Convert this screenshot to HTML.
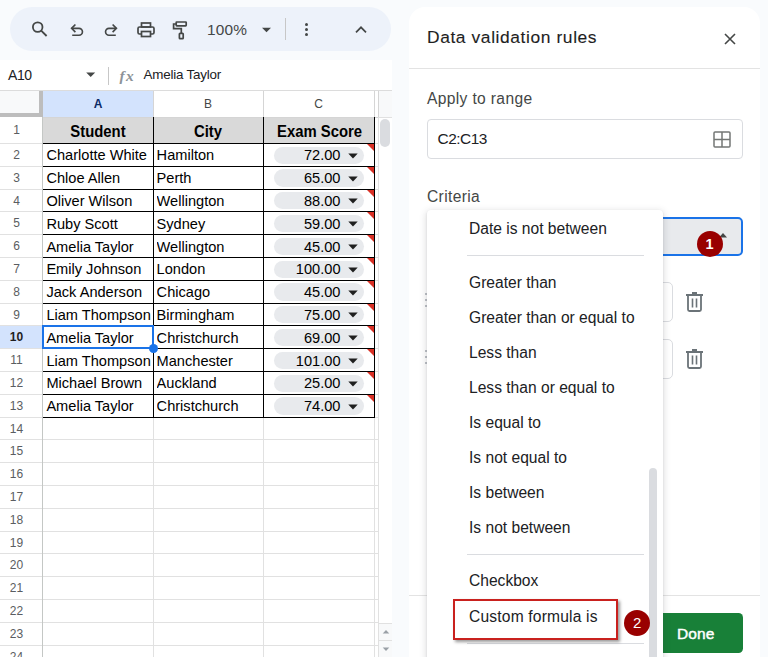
<!DOCTYPE html>
<html><head><meta charset="utf-8"><title>Data validation rules</title>
<style>
*{box-sizing:border-box}
html,body{margin:0;padding:0}
body{width:768px;height:657px;overflow:hidden;background:#f9fbfd;position:relative;font-family:"Liberation Sans",sans-serif;color:#202124}
.abs{position:absolute}
#toolbar{left:10px;top:7px;width:381px;height:44px;border-radius:22px;background:#edf2fa}
#sheet{left:0;top:60px;width:391.5px;height:597px;background:#fff;overflow:hidden}
.hl{position:absolute;left:0;height:1px;background:#e1e1e1}
.vl{position:absolute;width:1px;background:#e1e1e1}
.rn{position:absolute;left:0;width:33px;text-align:center;font-size:12px;color:#5a5d61}
.cell{position:absolute;font-size:14.6px;color:#000;white-space:nowrap;overflow:hidden}
.bl{position:absolute;background:#000}
.chip{position:absolute;background:#e8eaed;border-radius:9px}
.tri{position:absolute;width:0;height:0;border-top:7px solid #d93025;border-left:7px solid transparent}
#panel{left:409px;top:7px;width:351px;height:660px;background:#fff;border-radius:16px 16px 0 0}
.mi{position:absolute;left:42px;font-size:15.6px;color:#202124;white-space:nowrap;line-height:18px}
.md{position:absolute;left:40px;width:177px;height:1px;background:#dadce0}
.badge{position:absolute;width:26px;height:26px;border-radius:13px;background:#990000;color:#fff;text-align:center;line-height:26px;font-size:15px}
</style></head><body>

<div id="toolbar" class="abs"></div>
<svg class="abs" style="left:0;top:0" width="400" height="58" viewBox="0 0 400 58" fill="none" stroke="#444746" stroke-width="1.8" stroke-linecap="butt" stroke-linejoin="miter">
<circle cx="37.7" cy="27.1" r="4.8"/><path d="M41.2 30.6 L46.6 36"/>
<path d="M71.8 28.3 H79 A3.45 3.45 0 0 1 79 35.2 H72.2" stroke-width="1.65"/><path d="M75.4 24.5 L71.6 28.3 L75.4 32.1" stroke-width="1.65"/>
<path d="M116.2 28.3 H109 A3.45 3.45 0 0 0 109 35.2 H115.8" stroke-width="1.65"/><path d="M112.6 24.5 L116.4 28.3 L112.6 32.1" stroke-width="1.65"/>
<rect x="141.5" y="23" width="9" height="4" stroke-width="1.7"/><rect x="138" y="27" width="16" height="7" rx="1.5" stroke-width="1.7"/><rect x="141.5" y="31.5" width="9" height="5" fill="#edf2fa" stroke-width="1.7"/>
<rect x="176.2" y="22" width="10" height="3.8" rx="0.5" stroke-width="1.7"/><path d="M176 24 H173.6 V28.6 H181.3 V33" stroke-width="1.7"/><rect x="179.4" y="33.4" width="3.8" height="5.2" rx="0.7" stroke-width="1.7"/>
<path d="M356 32.3 L361 27.3 L366 32.3" stroke-width="1.7"/>
<path d="M285.5 18 V40" stroke="#c7c7c7" stroke-width="1"/>
<g fill="#444746" stroke="none"><circle cx="306.5" cy="24.6" r="1.5"/><circle cx="306.5" cy="29.6" r="1.5"/><circle cx="306.5" cy="34.6" r="1.5"/>
<path d="M262 27.7 H271 L266.5 32.2 Z"/></g>
</svg>
<div class="abs" style="left:207px;top:21px;font-size:15.4px;line-height:18px;color:#444746;letter-spacing:0.2px">100%</div>
<div id="sheet" class="abs">
<div class="abs" style="left:8px;top:7px;font-size:14px;line-height:17px;color:#202124;letter-spacing:-0.4px">A10</div>
<svg class="abs" style="left:86.3px;top:12.3px" width="10" height="6"><path d="M0.2 0.4 H9.2 L4.7 5 Z" fill="#444746"/></svg>
<div class="abs" style="left:108px;top:7px;width:1px;height:18px;background:#c7c7c7"></div>
<div class="abs" style="left:119.5px;top:6px;font-family:'Liberation Serif',serif;font-style:italic;font-weight:bold;font-size:15.4px;line-height:20px;color:#8d9398;letter-spacing:1.3px">fx</div>
<div class="abs" style="left:143.5px;top:6px;font-size:13.4px;line-height:17px;color:#202124;letter-spacing:-0.2px">Amelia Taylor</div>
<div class="hl" style="top:30px;width:392px;background:#dcdcdc"></div>
<div class="abs" style="left:0;top:31px;width:43px;height:26px;background:#f8f9fa;border-right:4px solid #bdbdbd;border-bottom:4px solid #bdbdbd"></div>
<div class="abs" style="left:43px;top:31px;width:110px;height:26px;background:#d3e3fd"></div>
<div class="abs" style="left:43px;top:37px;width:110px;text-align:center;font-size:12px;line-height:15px;font-weight:bold;color:#0b2a66">A</div>
<div class="abs" style="left:153px;top:37px;width:110px;text-align:center;font-size:12px;line-height:15px;color:#444746">B</div>
<div class="abs" style="left:263px;top:37px;width:111px;text-align:center;font-size:12px;line-height:15px;color:#444746">C</div>
<div class="vl" style="left:153px;top:31px;height:26px;background:#d5d5d5"></div>
<div class="vl" style="left:263px;top:31px;height:26px;background:#d5d5d5"></div>
<div class="vl" style="left:374px;top:31px;height:26px;background:#d5d5d5"></div>
<div class="vl" style="left:378px;top:31px;height:26px;background:#d5d5d5"></div>
<div class="hl" style="top:57px;left:43px;width:336px;background:#d5d5d5"></div>
<div class="abs" style="left:0;top:266px;width:43px;height:22px;background:#d3e3fd"></div>
<div class="hl" style="top:83px;width:379px"></div>
<div class="hl" style="top:106px;width:379px"></div>
<div class="hl" style="top:129px;width:379px"></div>
<div class="hl" style="top:151px;width:379px"></div>
<div class="hl" style="top:174px;width:379px"></div>
<div class="hl" style="top:197px;width:379px"></div>
<div class="hl" style="top:220px;width:379px"></div>
<div class="hl" style="top:243px;width:379px"></div>
<div class="hl" style="top:265px;width:379px"></div>
<div class="hl" style="top:288px;width:379px"></div>
<div class="hl" style="top:311px;width:379px"></div>
<div class="hl" style="top:334px;width:379px"></div>
<div class="hl" style="top:357px;width:379px"></div>
<div class="hl" style="top:379px;width:379px"></div>
<div class="hl" style="top:402px;width:379px"></div>
<div class="hl" style="top:425px;width:379px"></div>
<div class="hl" style="top:448px;width:379px"></div>
<div class="hl" style="top:471px;width:379px"></div>
<div class="hl" style="top:493px;width:379px"></div>
<div class="hl" style="top:516px;width:379px"></div>
<div class="hl" style="top:539px;width:379px"></div>
<div class="hl" style="top:562px;width:379px"></div>
<div class="hl" style="top:585px;width:379px"></div>
<div class="hl" style="top:607px;width:379px"></div>
<div class="vl" style="left:42px;top:57px;height:560px;background:#c4c7c5"></div>
<div class="vl" style="left:153px;top:57px;height:560px"></div>
<div class="vl" style="left:263px;top:57px;height:560px"></div>
<div class="vl" style="left:374px;top:57px;height:560px"></div>
<div class="vl" style="left:378px;top:57px;height:560px"></div>
<div class="rn" style="top:63px;height:14px;line-height:14px;">1</div>
<div class="rn" style="top:88px;height:14px;line-height:14px;">2</div>
<div class="rn" style="top:111px;height:14px;line-height:14px;">3</div>
<div class="rn" style="top:134px;height:14px;line-height:14px;">4</div>
<div class="rn" style="top:156px;height:14px;line-height:14px;">5</div>
<div class="rn" style="top:179px;height:14px;line-height:14px;">6</div>
<div class="rn" style="top:202px;height:14px;line-height:14px;">7</div>
<div class="rn" style="top:225px;height:14px;line-height:14px;">8</div>
<div class="rn" style="top:248px;height:14px;line-height:14px;">9</div>
<div class="rn" style="top:270px;height:14px;line-height:14px;font-weight:bold;color:#1f1f1f">10</div>
<div class="rn" style="top:293px;height:14px;line-height:14px;">11</div>
<div class="rn" style="top:316px;height:14px;line-height:14px;">12</div>
<div class="rn" style="top:339px;height:14px;line-height:14px;">13</div>
<div class="rn" style="top:362px;height:14px;line-height:14px;">14</div>
<div class="rn" style="top:384px;height:14px;line-height:14px;">15</div>
<div class="rn" style="top:407px;height:14px;line-height:14px;">16</div>
<div class="rn" style="top:430px;height:14px;line-height:14px;">17</div>
<div class="rn" style="top:453px;height:14px;line-height:14px;">18</div>
<div class="rn" style="top:476px;height:14px;line-height:14px;">19</div>
<div class="rn" style="top:498px;height:14px;line-height:14px;">20</div>
<div class="rn" style="top:521px;height:14px;line-height:14px;">21</div>
<div class="rn" style="top:544px;height:14px;line-height:14px;">22</div>
<div class="rn" style="top:567px;height:14px;line-height:14px;">23</div>
<div class="rn" style="top:590px;height:14px;line-height:14px;">24</div>
<div class="abs" style="left:43px;top:58px;width:331px;height:25px;background:#d9d9d9"></div>
<div class="cell" style="left:43.3px;top:58px;width:110px;height:25px;line-height:28px;text-align:center;font-weight:bold;font-size:15.8px;transform:scaleX(0.94)">Student</div>
<div class="cell" style="left:153.3px;top:58px;width:110px;height:25px;line-height:28px;text-align:center;font-weight:bold;font-size:15.8px;transform:scaleX(0.94)">City</div>
<div class="cell" style="left:263.8px;top:58px;width:111px;height:25px;line-height:28px;text-align:center;font-weight:bold;font-size:15.8px;transform:scaleX(0.94)">Exam Score</div>
<div class="cell" style="left:46.4px;top:85px;width:106.6px;height:20px;line-height:20px">Charlotte White</div>
<div class="cell" style="left:156.6px;top:85px;width:105px;height:20px;line-height:20px">Hamilton</div>
<div class="chip" style="left:274px;top:86.5px;width:90px;height:17.4px"></div>
<div class="cell" style="left:263px;top:85px;width:77.5px;height:20px;line-height:20px;text-align:right">72.00</div>
<svg class="abs" style="left:347.5px;top:93px" width="10" height="6"><path d="M0.3 0.5 H9.7 L5 5.5 Z" fill="#1f1f1f"/></svg>
<div class="tri" style="left:367px;top:84px"></div>
<div class="cell" style="left:46.4px;top:108px;width:106.6px;height:20px;line-height:20px">Chloe Allen</div>
<div class="cell" style="left:156.6px;top:108px;width:105px;height:20px;line-height:20px">Perth</div>
<div class="chip" style="left:274px;top:109.3px;width:90px;height:17.4px"></div>
<div class="cell" style="left:263px;top:108px;width:77.5px;height:20px;line-height:20px;text-align:right">65.00</div>
<svg class="abs" style="left:347.5px;top:116px" width="10" height="6"><path d="M0.3 0.5 H9.7 L5 5.5 Z" fill="#1f1f1f"/></svg>
<div class="tri" style="left:367px;top:107px"></div>
<div class="cell" style="left:46.4px;top:131px;width:106.6px;height:20px;line-height:20px">Oliver Wilson</div>
<div class="cell" style="left:156.6px;top:131px;width:105px;height:20px;line-height:20px">Wellington</div>
<div class="chip" style="left:274px;top:132.1px;width:90px;height:17.4px"></div>
<div class="cell" style="left:263px;top:131px;width:77.5px;height:20px;line-height:20px;text-align:right">88.00</div>
<svg class="abs" style="left:347.5px;top:138px" width="10" height="6"><path d="M0.3 0.5 H9.7 L5 5.5 Z" fill="#1f1f1f"/></svg>
<div class="tri" style="left:367px;top:130px"></div>
<div class="cell" style="left:46.4px;top:154px;width:106.6px;height:20px;line-height:20px">Ruby Scott</div>
<div class="cell" style="left:156.6px;top:154px;width:105px;height:20px;line-height:20px">Sydney</div>
<div class="chip" style="left:274px;top:154.9px;width:90px;height:17.4px"></div>
<div class="cell" style="left:263px;top:154px;width:77.5px;height:20px;line-height:20px;text-align:right">59.00</div>
<svg class="abs" style="left:347.5px;top:161px" width="10" height="6"><path d="M0.3 0.5 H9.7 L5 5.5 Z" fill="#1f1f1f"/></svg>
<div class="tri" style="left:367px;top:152px"></div>
<div class="cell" style="left:46.4px;top:177px;width:106.6px;height:20px;line-height:20px">Amelia Taylor</div>
<div class="cell" style="left:156.6px;top:177px;width:105px;height:20px;line-height:20px">Wellington</div>
<div class="chip" style="left:274px;top:177.7px;width:90px;height:17.4px"></div>
<div class="cell" style="left:263px;top:177px;width:77.5px;height:20px;line-height:20px;text-align:right">45.00</div>
<svg class="abs" style="left:347.5px;top:184px" width="10" height="6"><path d="M0.3 0.5 H9.7 L5 5.5 Z" fill="#1f1f1f"/></svg>
<div class="tri" style="left:367px;top:175px"></div>
<div class="cell" style="left:46.4px;top:199px;width:106.6px;height:20px;line-height:20px">Emily Johnson</div>
<div class="cell" style="left:156.6px;top:199px;width:105px;height:20px;line-height:20px">London</div>
<div class="chip" style="left:274px;top:200.5px;width:90px;height:17.4px"></div>
<div class="cell" style="left:263px;top:199px;width:77.5px;height:20px;line-height:20px;text-align:right">100.00</div>
<svg class="abs" style="left:347.5px;top:207px" width="10" height="6"><path d="M0.3 0.5 H9.7 L5 5.5 Z" fill="#1f1f1f"/></svg>
<div class="tri" style="left:367px;top:198px"></div>
<div class="cell" style="left:46.4px;top:222px;width:106.6px;height:20px;line-height:20px">Jack Anderson</div>
<div class="cell" style="left:156.6px;top:222px;width:105px;height:20px;line-height:20px">Chicago</div>
<div class="chip" style="left:274px;top:223.3px;width:90px;height:17.4px"></div>
<div class="cell" style="left:263px;top:222px;width:77.5px;height:20px;line-height:20px;text-align:right">45.00</div>
<svg class="abs" style="left:347.5px;top:230px" width="10" height="6"><path d="M0.3 0.5 H9.7 L5 5.5 Z" fill="#1f1f1f"/></svg>
<div class="tri" style="left:367px;top:221px"></div>
<div class="cell" style="left:46.4px;top:245px;width:106.6px;height:20px;line-height:20px">Liam Thompson</div>
<div class="cell" style="left:156.6px;top:245px;width:105px;height:20px;line-height:20px">Birmingham</div>
<div class="chip" style="left:274px;top:246.1px;width:90px;height:17.4px"></div>
<div class="cell" style="left:263px;top:245px;width:77.5px;height:20px;line-height:20px;text-align:right">75.00</div>
<svg class="abs" style="left:347.5px;top:252px" width="10" height="6"><path d="M0.3 0.5 H9.7 L5 5.5 Z" fill="#1f1f1f"/></svg>
<div class="tri" style="left:367px;top:244px"></div>
<div class="cell" style="left:46.4px;top:268px;width:106.6px;height:20px;line-height:20px">Amelia Taylor</div>
<div class="cell" style="left:156.6px;top:268px;width:105px;height:20px;line-height:20px">Christchurch</div>
<div class="chip" style="left:274px;top:268.9px;width:90px;height:17.4px"></div>
<div class="cell" style="left:263px;top:268px;width:77.5px;height:20px;line-height:20px;text-align:right">69.00</div>
<svg class="abs" style="left:347.5px;top:275px" width="10" height="6"><path d="M0.3 0.5 H9.7 L5 5.5 Z" fill="#1f1f1f"/></svg>
<div class="tri" style="left:367px;top:266px"></div>
<div class="cell" style="left:46.4px;top:291px;width:106.6px;height:20px;line-height:20px">Liam Thompson</div>
<div class="cell" style="left:156.6px;top:291px;width:105px;height:20px;line-height:20px">Manchester</div>
<div class="chip" style="left:274px;top:291.7px;width:90px;height:17.4px"></div>
<div class="cell" style="left:263px;top:291px;width:77.5px;height:20px;line-height:20px;text-align:right">101.00</div>
<svg class="abs" style="left:347.5px;top:298px" width="10" height="6"><path d="M0.3 0.5 H9.7 L5 5.5 Z" fill="#1f1f1f"/></svg>
<div class="tri" style="left:367px;top:289px"></div>
<div class="cell" style="left:46.4px;top:313px;width:106.6px;height:20px;line-height:20px">Michael Brown</div>
<div class="cell" style="left:156.6px;top:313px;width:105px;height:20px;line-height:20px">Auckland</div>
<div class="chip" style="left:274px;top:314.5px;width:90px;height:17.4px"></div>
<div class="cell" style="left:263px;top:313px;width:77.5px;height:20px;line-height:20px;text-align:right">25.00</div>
<svg class="abs" style="left:347.5px;top:321px" width="10" height="6"><path d="M0.3 0.5 H9.7 L5 5.5 Z" fill="#1f1f1f"/></svg>
<div class="tri" style="left:367px;top:312px"></div>
<div class="cell" style="left:46.4px;top:336px;width:106.6px;height:20px;line-height:20px">Amelia Taylor</div>
<div class="cell" style="left:156.6px;top:336px;width:105px;height:20px;line-height:20px">Christchurch</div>
<div class="chip" style="left:274px;top:337.3px;width:90px;height:17.4px"></div>
<div class="cell" style="left:263px;top:336px;width:77.5px;height:20px;line-height:20px;text-align:right">74.00</div>
<svg class="abs" style="left:347.5px;top:344px" width="10" height="6"><path d="M0.3 0.5 H9.7 L5 5.5 Z" fill="#1f1f1f"/></svg>
<div class="tri" style="left:367px;top:335px"></div>
<div class="bl" style="left:43px;top:83px;width:332px;height:1px"></div>
<div class="bl" style="left:43px;top:106px;width:332px;height:1px"></div>
<div class="bl" style="left:43px;top:129px;width:332px;height:1px"></div>
<div class="bl" style="left:43px;top:151px;width:332px;height:1px"></div>
<div class="bl" style="left:43px;top:174px;width:332px;height:1px"></div>
<div class="bl" style="left:43px;top:197px;width:332px;height:1px"></div>
<div class="bl" style="left:43px;top:220px;width:332px;height:1px"></div>
<div class="bl" style="left:43px;top:243px;width:332px;height:1px"></div>
<div class="bl" style="left:43px;top:265px;width:332px;height:1px"></div>
<div class="bl" style="left:43px;top:288px;width:332px;height:1px"></div>
<div class="bl" style="left:43px;top:311px;width:332px;height:1px"></div>
<div class="bl" style="left:43px;top:334px;width:332px;height:1px"></div>
<div class="bl" style="left:43px;top:357px;width:332px;height:1px"></div>
<div class="bl" style="left:153px;top:57px;width:1px;height:300px"></div>
<div class="bl" style="left:263px;top:57px;width:1px;height:300px"></div>
<div class="bl" style="left:374px;top:57px;width:1px;height:300px"></div>
<div class="abs" style="left:42px;top:265px;width:112px;height:24px;border:2px solid #1a73e8"></div>
<div class="abs" style="left:149px;top:284px;width:9px;height:9px;border-radius:5px;background:#1a73e8"></div>
<div class="abs" style="left:379px;top:31px;width:14px;height:26px;background:#f8f9fa"></div>
<div class="hl" style="top:57px;left:378px;width:14px;background:#e1e1e1"></div>
<div class="abs" style="left:380px;top:58.5px;width:10px;height:28.5px;border-radius:5px;background:#dadce0"></div>
<div class="abs" style="left:379px;top:563px;width:13px;height:40px;background:#f8f9fa"></div>
<div class="abs" style="left:379px;top:563px;width:13px;height:1px;background:#e1e1e1"></div>
<div class="abs" style="left:379px;top:580px;width:13px;height:1px;background:#e1e1e1"></div>
<svg class="abs" style="left:381.5px;top:568.5px" width="8" height="5"><path d="M0.7 4.5 L4 1 L7.3 4.5 Z" fill="#9aa0a6"/></svg>
<svg class="abs" style="left:381.5px;top:586.5px" width="8" height="5"><path d="M0.7 0.5 L4 4 L7.3 0.5 Z" fill="#9aa0a6"/></svg>
</div>
<div id="panel" class="abs">
<div class="abs" style="left:18px;top:20px;font-size:17.4px;line-height:21px;color:#1f1f1f;letter-spacing:0.6px;-webkit-text-stroke:0.12px #1f1f1f">Data validation rules</div>
<svg class="abs" style="left:315px;top:25.5px" width="12" height="12"><path d="M1 1 L11 11 M11 1 L1 11" stroke="#444746" stroke-width="1.6" fill="none"/></svg>
<div class="abs" style="left:0;top:61px;width:351px;height:1px;background:#e3e3e3"></div>
<div class="abs" style="left:18px;top:82px;font-size:15.6px;line-height:19px;color:#444746;letter-spacing:0.35px">Apply to range</div>
<div class="abs" style="left:18px;top:112px;width:316px;height:40px;border:1px solid #dadce0;border-radius:4px"></div>
<div class="abs" style="left:28.6px;top:123px;font-size:15.4px;line-height:18px;color:#202124;letter-spacing:-0.5px">C2:C13</div>
<svg class="abs" style="left:304px;top:124px" width="18" height="17" fill="none" stroke="#747775" stroke-width="1.5"><rect x="1" y="1" width="16" height="15" rx="1"/><path d="M9 1 V16 M1 8.5 H17"/></svg>
<div class="abs" style="left:18px;top:180px;font-size:15.6px;line-height:19px;color:#444746;letter-spacing:0.35px">Criteria</div>
<div class="abs" style="left:18px;top:209.5px;width:315.5px;height:39.5px;border:2px solid #1a73e8;border-radius:5px;background:#e8eaed"></div>
<svg class="abs" style="left:310px;top:226px" width="8" height="5"><path d="M0 4.6 L4 0 L8 4.6 Z" fill="#444746"/></svg>
<div class="badge" style="left:287.5px;top:224.2px;font-weight:bold;font-size:14.5px">1</div>
<div class="abs" style="left:171px;top:275px;width:93px;height:40px;border:1px solid #dadce0;border-radius:5px"></div>
<svg class="abs" style="left:276px;top:285px" width="19" height="21" fill="none" stroke="#6b7378" stroke-width="1.8"><path d="M1 3 H18 M7 1 H12"/><path d="M3 3.5 V17.5 Q3 19 4.5 19 H14.5 Q16 19 16 17.5 V3.5"/><path d="M7.5 6.5 V15.5 M11.5 6.5 V15.5" stroke-width="1.6"/></svg>
<div class="abs" style="left:16px;top:285.6px;width:2px;height:2px;background:#bdc1c6"></div>
<div class="abs" style="left:16px;top:292px;width:2px;height:2px;background:#bdc1c6"></div>
<div class="abs" style="left:16px;top:298.4px;width:2px;height:2px;background:#bdc1c6"></div>
<div class="abs" style="left:171px;top:332px;width:93px;height:40px;border:1px solid #dadce0;border-radius:5px"></div>
<svg class="abs" style="left:276px;top:342px" width="19" height="21" fill="none" stroke="#6b7378" stroke-width="1.8"><path d="M1 3 H18 M7 1 H12"/><path d="M3 3.5 V17.5 Q3 19 4.5 19 H14.5 Q16 19 16 17.5 V3.5"/><path d="M7.5 6.5 V15.5 M11.5 6.5 V15.5" stroke-width="1.6"/></svg>
<div class="abs" style="left:16px;top:342.6px;width:2px;height:2px;background:#bdc1c6"></div>
<div class="abs" style="left:16px;top:349px;width:2px;height:2px;background:#bdc1c6"></div>
<div class="abs" style="left:16px;top:355.4px;width:2px;height:2px;background:#bdc1c6"></div>
<div class="abs" style="left:0;top:588px;width:351px;height:1px;background:#e3e3e3"></div>
<div class="abs" style="left:231px;top:606px;width:102.60000000000002px;height:39.6px;border-radius:4.5px;background:#188038"></div>
<div class="abs" style="left:268px;top:617px;font-size:15.5px;line-height:19px;color:#fff;letter-spacing:0.1px;-webkit-text-stroke:0.45px #fff">Done</div>
<div class="abs" style="left:18px;top:203px;width:235.70000000000005px;height:470px;background:#fff;border-radius:4px;box-shadow:0 2px 6px 2px rgba(60,64,67,.13),0 1px 2px rgba(60,64,67,.16)">
<div class="mi" style="top:9.9px;">Date is not between</div>
<div class="mi" style="top:64.1px;">Greater than</div>
<div class="mi" style="top:98.6px;">Greater than or equal to</div>
<div class="mi" style="top:133.5px;">Less than</div>
<div class="mi" style="top:168.7px;">Less than or equal to</div>
<div class="mi" style="top:203.6px;">Is equal to</div>
<div class="mi" style="top:238.7px;">Is not equal to</div>
<div class="mi" style="top:273.6px;">Is between</div>
<div class="mi" style="top:308.7px;">Is not between</div>
<div class="mi" style="top:362.3px;">Checkbox</div>
<div class="mi" style="top:397.5px; letter-spacing:0.18px;">Custom formula is</div>
<div class="md" style="top:45px"></div>
<div class="md" style="top:344px"></div>
<div class="md" style="top:433px"></div>
<div class="abs" style="left:222px;top:258px;width:8px;height:220px;border-radius:4px;background:#dadce0"></div>
<div class="abs" style="left:25.8px;top:389px;width:165.5px;height:41px;border:2px solid #c9211e;box-shadow:2px 2px 3px rgba(0,0,0,.4)"></div>
<div class="badge" style="left:197.20000000000005px;top:400.20000000000005px">2</div>
</div>
</div>
</body></html>
